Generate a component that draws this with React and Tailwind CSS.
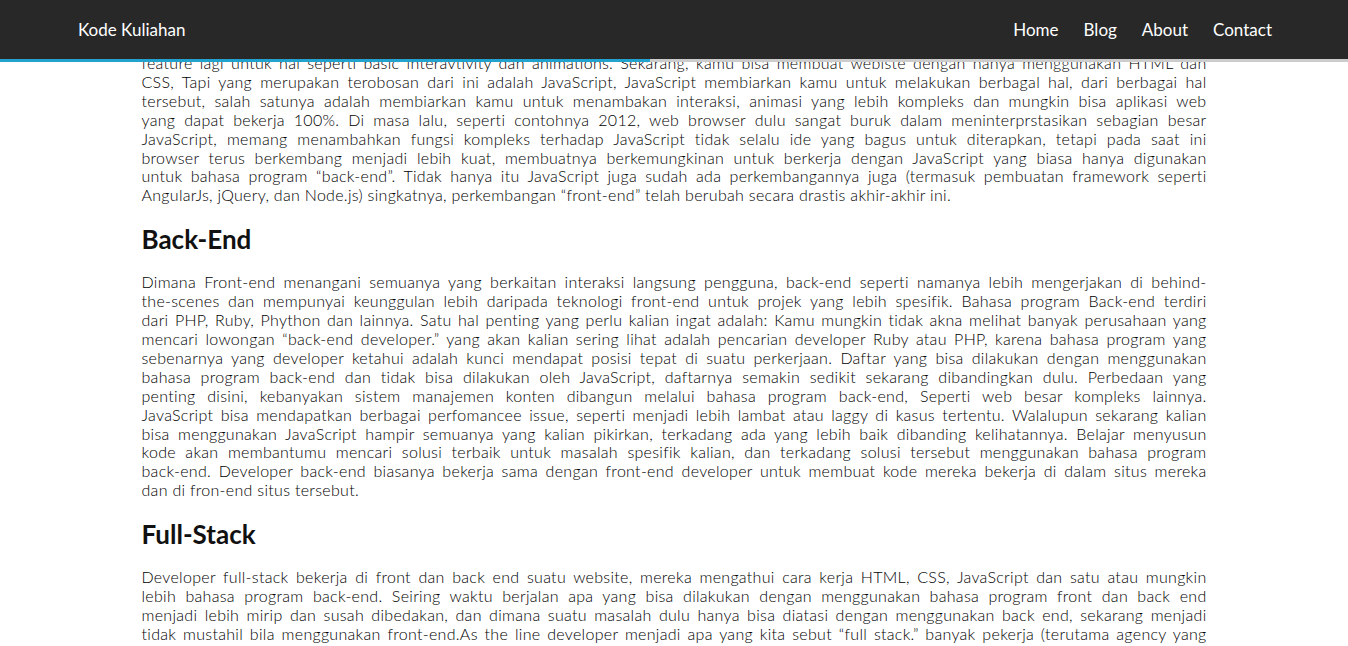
import React from "react";

const sections = [
  {
    title: null,
    lines: [
      "feature lagi untuk hal seperti basic interavtivity dan animations. Sekarang, kamu bisa membuat webiste dengan hanya menggunakan HTML dan",
      "CSS, Tapi yang merupakan terobosan dari ini adalah JavaScript, JavaScript membiarkan kamu untuk melakukan berbagal hal, dari berbagai hal",
      "tersebut, salah satunya adalah membiarkan kamu untuk menambakan interaksi, animasi yang lebih kompleks dan mungkin bisa aplikasi web",
      "yang dapat bekerja 100%. Di masa lalu, seperti contohnya 2012, web browser dulu sangat buruk dalam meninterprstasikan sebagian besar",
      "JavaScript, memang menambahkan fungsi kompleks terhadap JavaScript tidak selalu ide yang bagus untuk diterapkan, tetapi pada saat ini",
      "browser terus berkembang menjadi lebih kuat, membuatnya berkemungkinan untuk berkerja dengan JavaScript yang biasa hanya digunakan",
      "untuk bahasa program \u201cback-end\u201d. Tidak hanya itu JavaScript juga sudah ada perkembangannya juga (termasuk pembuatan framework seperti",
      "AngularJs, jQuery, dan Node.js) singkatnya, perkembangan \u201cfront-end\u201d telah berubah secara drastis akhir-akhir ini.",
    ],
  },
  {
    title: "Back-End",
    lines: [
      "Dimana Front-end menangani semuanya yang berkaitan interaksi langsung pengguna, back-end seperti namanya lebih mengerjakan di behind-",
      "the-scenes dan mempunyai keunggulan lebih daripada teknologi front-end untuk projek yang lebih spesifik. Bahasa program Back-end terdiri",
      "dari PHP, Ruby, Phython dan lainnya. Satu hal penting yang perlu kalian ingat adalah: Kamu mungkin tidak akna melihat banyak perusahaan yang",
      "mencari lowongan \u201cback-end developer.\u201d yang akan kalian sering lihat adalah pencarian developer Ruby atau PHP, karena bahasa program yang",
      "sebenarnya yang developer ketahui adalah kunci mendapat posisi tepat di suatu perkerjaan. Daftar yang bisa dilakukan dengan menggunakan",
      "bahasa program back-end dan tidak bisa dilakukan oleh JavaScript, daftarnya semakin sedikit sekarang dibandingkan dulu. Perbedaan yang",
      "penting disini, kebanyakan sistem manajemen konten dibangun melalui bahasa program back-end, Seperti web besar kompleks lainnya.",
      "JavaScript bisa mendapatkan berbagai perfomancee issue, seperti menjadi lebih lambat atau laggy di kasus tertentu. Walalupun sekarang kalian",
      "bisa menggunakan JavaScript hampir semuanya yang kalian pikirkan, terkadang ada yang lebih baik dibanding kelihatannya. Belajar menyusun",
      "kode akan membantumu mencari solusi terbaik untuk masalah spesifik kalian, dan terkadang solusi tersebut menggunakan bahasa program",
      "back-end. Developer back-end biasanya bekerja sama dengan front-end developer untuk membuat kode mereka bekerja di dalam situs mereka",
      "dan di fron-end situs tersebut.",
    ],
  },
  {
    title: "Full-Stack",
    lines: [
      "Developer full-stack bekerja di front dan back end suatu website, mereka mengathui cara kerja HTML, CSS, JavaScript dan satu atau mungkin",
      "lebih bahasa program back-end. Seiring waktu berjalan apa yang bisa dilakukan dengan menggunakan bahasa program front dan back end",
      "menjadi lebih mirip dan susah dibedakan, dan dimana suatu masalah dulu hanya bisa diatasi dengan menggunakan back end, sekarang menjadi",
      "tidak mustahil bila menggunakan front-end.As the line developer menjadi apa yang kita sebut \u201cfull stack.\u201d banyak pekerja (terutama agency yang",
      "kecil) mencari developer yang bisa bekerja di kedua sisi.",
    ],
  },
];

function Paragraph({ lines }) {
  return (
    <p className="text-[16px] leading-[18.9px] tracking-[0.3px] font-light text-black">
      {lines.map((line, i) =>
        i < lines.length - 1 ? (
          <span key={i} className="block text-justify [text-align-last:justify]">
            {line}
          </span>
        ) : (
          <span key={i} className="block">
            {line}
          </span>
        )
      )}
    </p>
  );
}

export default function App() {
  return (
    <div className="min-h-screen bg-white font-['Lato',sans-serif]">
      <header className="fixed top-0 left-0 right-0 z-10">
        <div className="flex h-[59px] items-center justify-between bg-[#282828] pl-[78px] pr-[76px] text-white">
          <span className="text-[17px]">Kode Kuliahan</span>
          <nav className="flex items-center gap-[25px] text-[17px]">
            <a href="#">Home</a>
            <a href="#">Blog</a>
            <a href="#">About</a>
            <a href="#">Contact</a>
          </nav>
        </div>
        <div className="h-[3px] bg-[#cccccc]">
          <div className="h-full w-[650px] bg-[#22a2cc]" />
        </div>
      </header>

      <main className="mx-auto w-[1065px] pt-[54px] pb-10">
        {sections.map((s, i) => (
          <section key={i}>
            {s.title && (
              <h2 className="mb-[19px] text-[26px] font-bold leading-[29px] text-[#111]">
                {s.title}
              </h2>
            )}
            <div className="mb-[20px]">
              <Paragraph lines={s.lines} />
            </div>
          </section>
        ))}
      </main>
    </div>
  );
}
